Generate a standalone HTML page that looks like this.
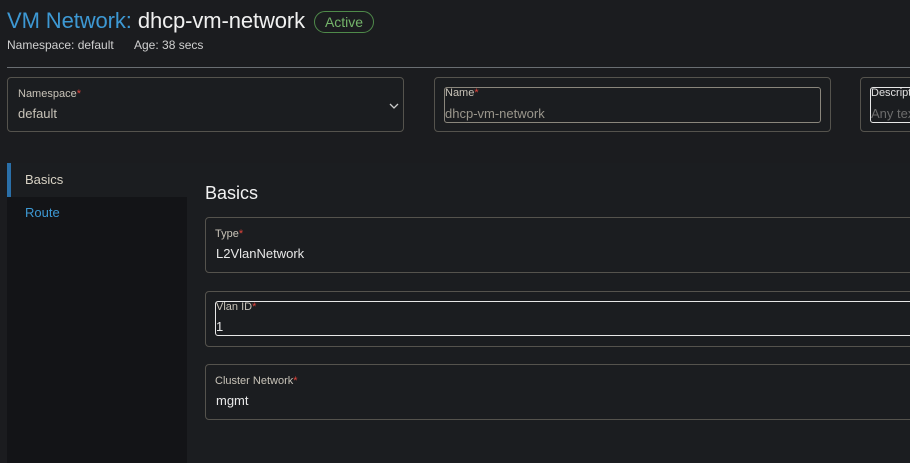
<!DOCTYPE html>
<html><head><meta charset="utf-8"><style>
*{box-sizing:border-box;margin:0;padding:0}
body{width:910px;height:463px;overflow:hidden;background:#1b1c1f;font-family:"Liberation Sans",sans-serif;color:#dcdcdc;position:relative}
.a{position:absolute;white-space:nowrap}
.box{position:absolute;border:1px solid #55534d;border-radius:4px;background:#1b1d20}
.lbl{font-size:11px;color:#c8c3b8}
.req{color:#e0443b}
.val{font-size:13px;color:#e8e8e8}
</style></head><body>
<div class="a" style="left:7px;top:8px;font-size:22px;letter-spacing:-0.1px"><span style="color:#3d98d3">VM Network:</span> <span style="color:#f0f0f0">dhcp-vm-network</span></div>
<div class="a" style="left:314px;top:11px;width:60px;height:22px;border:1px solid #4f8a4a;border-radius:11px;color:#74b46a;font-size:14px;text-align:center;line-height:20px">Active</div>
<div class="a" style="left:7px;top:38px;font-size:12px;color:#d0d0d0">Namespace: default</div>
<div class="a" style="left:134px;top:38px;font-size:12px;color:#d0d0d0">Age: 38 secs</div>
<div class="a" style="left:7px;top:67px;width:903px;height:1px;background:#6a6e72"></div>

<div class="box" style="left:7px;top:77px;width:397px;height:55px"></div>
<div class="a lbl" style="left:18px;top:88px">Namespace<span class="req">*</span></div>
<div class="a val" style="left:18px;top:106px;color:#c8c3b8">default</div>
<svg class="a" style="left:389px;top:102px" width="10" height="8"><path d="M1 2l4 4 4-4" stroke="#ccc" stroke-width="1.3" fill="none"/></svg>

<div class="box" style="left:434px;top:77px;width:397px;height:55px"></div>
<div class="a" style="left:444px;top:87px;width:377px;height:36px;border:1px solid #8a867c;border-radius:3px"></div>
<div class="a lbl" style="left:445px;top:87px">Name<span class="req">*</span></div>
<div class="a val" style="left:445px;top:106px;color:#9a968c">dhcp-vm-network</div>

<div class="box" style="left:860px;top:77px;width:60px;height:55px"></div>
<div class="a" style="left:870px;top:87px;width:50px;height:36px;border:1px solid #e8e8e8;border-radius:3px"></div>
<div class="a lbl" style="left:871px;top:87px;color:#e0e0e0">Description</div>
<div class="a val" style="left:871px;top:106px;color:#6c6c6c">Any text</div>

<div class="a" style="left:7px;top:163px;width:903px;height:300px;background:#1b1d20"></div>
<div class="a" style="left:7px;top:197px;width:180px;height:266px;background:#131417"></div>
<div class="a" style="left:7px;top:163px;width:4px;height:34px;background:#2a6fa8"></div>
<div class="a" style="left:25px;top:172px;font-size:13px;color:#d8d2c4">Basics</div>
<div class="a" style="left:25px;top:205px;font-size:13px;color:#3d98d3">Route</div>
<div class="a" style="left:205px;top:183px;font-size:18px;color:#f2f2f2">Basics</div>

<div class="box" style="left:205px;top:217px;width:720px;height:56px"></div>
<div class="a lbl" style="left:215px;top:228px">Type<span class="req">*</span></div>
<div class="a val" style="left:216px;top:246px">L2VlanNetwork</div>

<div class="box" style="left:205px;top:291px;width:720px;height:56px"></div>
<div class="a" style="left:215px;top:301px;width:710px;height:35px;border:1px solid #e8e8e8;border-radius:3px"></div>
<div class="a lbl" style="left:216px;top:301px">Vlan ID<span class="req">*</span></div>
<div class="a val" style="left:216px;top:319px">1</div>

<div class="box" style="left:205px;top:364px;width:720px;height:56px"></div>
<div class="a lbl" style="left:215px;top:375px">Cluster Network<span class="req">*</span></div>
<div class="a val" style="left:216px;top:393px">mgmt</div>
</body></html>
